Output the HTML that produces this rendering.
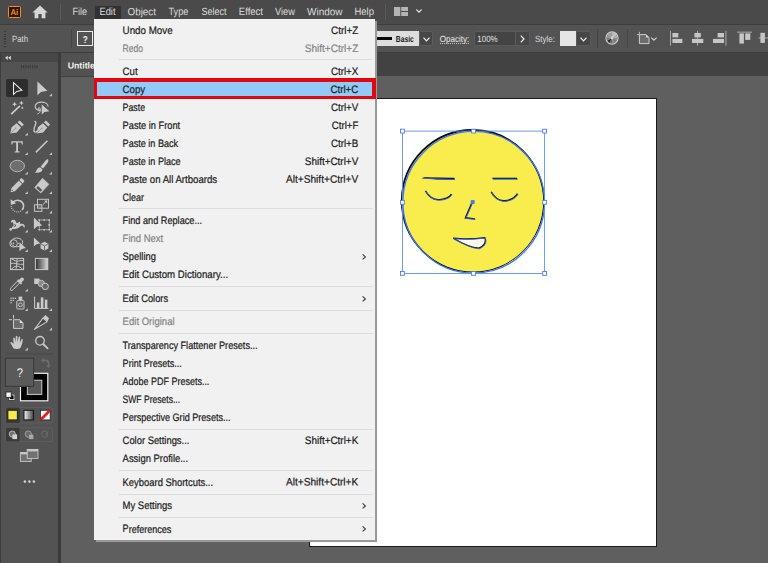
<!DOCTYPE html>
<html><head><meta charset="utf-8"><title>Ai</title>
<style>
html,body{margin:0;padding:0;}
body{width:768px;height:563px;overflow:hidden;position:relative;background:#5f5f5f;font-family:"Liberation Sans",sans-serif;}
.a{position:absolute;}
.t{position:absolute;white-space:nowrap;transform-origin:0 50%;display:block;}
svg{position:absolute;overflow:visible;}
</style></head><body>
<div class="a" style="left:309px;top:97.5px;width:347.5px;height:449px;background:#1a1a1a;"></div>
<div class="a" style="left:310px;top:98.5px;width:345.5px;height:447px;background:#fff;"></div>
<svg class="a" style="left:0;top:0" width="768" height="563" viewBox="0 0 768 563"><circle cx="472.6" cy="200.8" r="70.8" fill="#f9ec4d" stroke="#0b0d12" stroke-width="1.8"/><circle cx="473.2" cy="201.6" r="70" fill="#f9ec4d"/><circle cx="473.7" cy="202.3" r="70.85" fill="none" stroke="#3f74f2" stroke-width="1.3"/><g transform="translate(-0.5,-0.6)"><path d="M424 178.1 L454.8 178.7 L454.8 180.1 L437 179.9 Z" fill="#0e1630" stroke="#0e1630" stroke-width="0.5"/><path d="M493 179 L517.6 179" stroke="#0e1630" stroke-width="1.4" fill="none"/><path d="M425.9 191.4 C430 198.5 436 200.6 440.5 200.2 C445.5 199.8 450 198 452 194.8" stroke="#0e1630" stroke-width="1.4" fill="none"/><path d="M491.7 192.5 C495 198.5 500 201.6 505 201.3 C510.5 201 515.5 198.5 518 194.3" stroke="#0e1630" stroke-width="1.4" fill="none"/><path d="M472.8 202.5 L465.9 218.4 L475.4 219.5" stroke="#0e1630" stroke-width="1.4" fill="none"/><path d="M453.8 238.8 Q469 240.4 485.3 238.2 C487 241.5 485.5 246.5 479.3 248.8 C472 248.2 462 243.6 453.8 238.8 Z" fill="#fbfae8" stroke="#0e1630" stroke-width="1.3"/></g><path d="M422.2 178.3 L455 179.6" stroke="#2f62e0" stroke-width="1" fill="none"/><path d="M493 179.2 L517.8 179.2" stroke="#2f62e0" stroke-width="1" fill="none"/><path d="M425.9 191.4 C430 198.5 436 200.6 440.5 200.2 C445.5 199.8 450 198 452 194.8" stroke="#2f62e0" stroke-width="0.9" fill="none"/><path d="M491.7 192.5 C495 198.5 500 201.6 505 201.3 C510.5 201 515.5 198.5 518 194.3" stroke="#2f62e0" stroke-width="0.9" fill="none"/><path d="M472.8 202.5 L465.9 218.4 L475.4 219.5" stroke="#2f62e0" stroke-width="0.9" fill="none"/><path d="M453.8 238.8 Q469 240.4 485.3 238.2 C487 241.5 485.5 246.5 479.3 248.8 C472 248.2 462 243.6 453.8 238.8 Z" fill="none" stroke="#2f62e0" stroke-width="0.8"/><rect x="470.8" y="200.1" width="3.8" height="3.8" fill="#3f78f2"/><rect x="402.45" y="131.1" width="142.15000000000003" height="142.35" fill="none" stroke="#5c8cf5" stroke-width="0.9"/><rect x="400.55" y="129.2" width="3.8" height="3.8" fill="#fff" stroke="#4a7df0" stroke-width="0.9"/><rect x="471.625" y="129.2" width="3.8" height="3.8" fill="#fff" stroke="#4a7df0" stroke-width="0.9"/><rect x="542.7" y="129.2" width="3.8" height="3.8" fill="#fff" stroke="#4a7df0" stroke-width="0.9"/><rect x="400.55" y="200.37499999999997" width="3.8" height="3.8" fill="#fff" stroke="#4a7df0" stroke-width="0.9"/><rect x="542.7" y="200.37499999999997" width="3.8" height="3.8" fill="#fff" stroke="#4a7df0" stroke-width="0.9"/><rect x="400.55" y="271.55" width="3.8" height="3.8" fill="#fff" stroke="#4a7df0" stroke-width="0.9"/><rect x="471.625" y="271.55" width="3.8" height="3.8" fill="#fff" stroke="#4a7df0" stroke-width="0.9"/><rect x="542.7" y="271.55" width="3.8" height="3.8" fill="#fff" stroke="#4a7df0" stroke-width="0.9"/></svg>
<div class="a" style="left:0;top:0;width:768px;height:24.2px;background:#4a4a4a;"></div>
<div class="a" style="left:0;top:24px;width:768px;height:28.5px;background:#535353;"></div>
<div class="a" style="left:0;top:24.1px;width:768px;height:1px;background:#3d3d3d;"></div>
<div class="a" style="left:0;top:52.5px;width:768px;height:23.5px;background:#424242;"></div>
<div class="a" style="left:60.3px;top:53.3px;width:60px;height:22.7px;background:#515151;"></div>
<div class="a" style="left:60.3px;top:76px;width:40px;height:1.1px;background:#3f3f3f;"></div>
<span class="t" style="left:67px;top:57px;font-size:8.9px;line-height:16px;color:#f4f2ec;transform:translate(0.70px,0.40px) rotate(0.03deg) scaleX(0.9842);font-weight:bold;">Untitled</span>
<div class="a" style="left:0;top:51.9px;width:768px;height:1.1px;background:#3d3d3d;"></div>
<div class="a" style="left:7.9px;top:5.5px;width:13px;height:12.5px;box-sizing:border-box;border:1.1px solid #f3901a;border-radius:1.5px;background:#2d1505;"></div>
<span class="t" style="left:10px;top:5px;font-size:8.2px;line-height:16px;color:#f3901a;transform:translate(0.50px,0.10px) rotate(0.03deg) scaleX(0.9512);font-weight:bold;">Ai</span>
<svg style="left:32px;top:5.4px" width="16" height="14" viewBox="0 0 16 14"><path d="M8 0.4 L0.4 7.6 L2.6 7.6 L2.6 13.2 L6.4 13.2 L6.4 9 L9.6 9 L9.6 13.2 L13.4 13.2 L13.4 7.6 L15.6 7.6 Z" fill="#d6d6d6"/></svg>
<div class="a" style="left:59.5px;top:4px;width:1px;height:16px;background:#5a5a5a;"></div>
<div class="a" style="left:94.8px;top:5.6px;width:26px;height:13.4px;background:#313131;"></div>
<span class="t" style="left:72px;top:3px;font-size:10.5px;line-height:16px;color:#dcdcdc;transform:translate(0.50px,0.20px) rotate(0.03deg) scaleX(0.8570);">File</span>
<span class="t" style="left:99px;top:3px;font-size:10.5px;line-height:16px;color:#dcdcdc;transform:translate(0.50px,0.20px) rotate(0.03deg) scaleX(0.8843);">Edit</span>
<span class="t" style="left:127px;top:3px;font-size:10.5px;line-height:16px;color:#dcdcdc;transform:translate(0.50px,0.20px) rotate(0.03deg) scaleX(0.9391);">Object</span>
<span class="t" style="left:168px;top:3px;font-size:10.5px;line-height:16px;color:#dcdcdc;transform:translate(0.50px,0.20px) rotate(0.03deg) scaleX(0.8786);">Type</span>
<span class="t" style="left:201px;top:3px;font-size:10.5px;line-height:16px;color:#dcdcdc;transform:translate(0.50px,0.20px) rotate(0.03deg) scaleX(0.8567);">Select</span>
<span class="t" style="left:238px;top:3px;font-size:10.5px;line-height:16px;color:#dcdcdc;transform:translate(0.80px,0.20px) rotate(0.03deg) scaleX(0.9079);">Effect</span>
<span class="t" style="left:275px;top:3px;font-size:10.5px;line-height:16px;color:#dcdcdc;transform:translate(0.00px,0.20px) rotate(0.03deg) scaleX(0.8861);">View</span>
<span class="t" style="left:307px;top:3px;font-size:10.5px;line-height:16px;color:#dcdcdc;transform:translate(0.00px,0.20px) rotate(0.03deg) scaleX(0.9506);">Window</span>
<span class="t" style="left:354px;top:3px;font-size:10.5px;line-height:16px;color:#dcdcdc;transform:translate(0.50px,0.20px) rotate(0.03deg) scaleX(0.9030);">Help</span>
<div class="a" style="left:385px;top:4px;width:1px;height:16px;background:#5a5a5a;"></div>
<svg style="left:394px;top:6.8px" width="14" height="9" viewBox="0 0 14 9"><rect x="0" y="0" width="6.3" height="9" fill="#b4b4b4"/><rect x="7.2" y="0" width="6.8" height="4" fill="#b4b4b4"/><rect x="7.2" y="5" width="6.8" height="4" fill="#b4b4b4"/></svg>
<svg style="left:415.5px;top:9.3px" width="6" height="4" viewBox="0 0 6 4"><path d="M0.4 0.5 L3 3.2 L5.6 0.5" stroke="#e0e0e0" stroke-width="1.1" fill="none"/></svg>
<div class="a" style="left:4px;top:31.0px;width:2px;height:1.3px;background:#3a3a3a;"></div>
<div class="a" style="left:4px;top:33.5px;width:2px;height:1.3px;background:#3a3a3a;"></div>
<div class="a" style="left:4px;top:35.9px;width:2px;height:1.3px;background:#3a3a3a;"></div>
<div class="a" style="left:4px;top:38.4px;width:2px;height:1.3px;background:#3a3a3a;"></div>
<div class="a" style="left:4px;top:40.8px;width:2px;height:1.3px;background:#3a3a3a;"></div>
<div class="a" style="left:4px;top:43.2px;width:2px;height:1.3px;background:#3a3a3a;"></div>
<div class="a" style="left:4px;top:45.7px;width:2px;height:1.3px;background:#3a3a3a;"></div>
<span class="t" style="left:12px;top:31px;font-size:9px;line-height:16px;color:#dcdcdc;transform:translate(0.00px,0.40px) rotate(0.03deg) scaleX(0.8642);">Path</span>
<div class="a" style="left:77px;top:31.2px;width:15.9px;height:15.2px;box-sizing:border-box;border:1.8px solid #ececec;background:#535353;"></div>
<span class="t" style="left:82px;top:31px;font-size:10px;line-height:16px;color:#ececec;transform:translate(0.80px,0.60px) rotate(0.03deg) scaleX(0.8185);font-weight:bold;">?</span>
<div class="a" style="left:71px;top:28.5px;width:1px;height:19.5px;background:#454545;"></div>
<div class="a" style="left:372px;top:31.2px;width:46.8px;height:14.7px;background:#dedede;"></div>
<div class="a" style="left:372px;top:37.4px;width:20.3px;height:2.5px;background:#0a0a0a;"></div>
<span class="t" style="left:395px;top:31px;font-size:8.8px;line-height:16px;color:#1a1a1a;transform:translate(0.80px,0.10px) rotate(0.03deg) scaleX(0.7665);font-weight:bold;">Basic</span>
<div class="a" style="left:419.4px;top:30.6px;width:13.8px;height:15.6px;box-sizing:border-box;border:1px solid #5c5c5c;border-radius:2px;background:#464646;"></div>
<svg style="left:423.2px;top:37px" width="7" height="5" viewBox="0 0 7 5"><path d="M0.5 0.6 L3.5 3.8 L6.5 0.6" stroke="#f0f0f0" stroke-width="1.2" fill="none"/></svg>
<span class="t" style="left:439px;top:31px;font-size:9px;line-height:16px;color:#ececec;transform:translate(0.80px,0.30px) rotate(0.03deg) scaleX(0.8936);">Opacity:</span>
<div class="a" style="left:440px;top:43.1px;width:29px;height:0;border-top:1px dotted #c4c4c4;"></div>
<div class="a" style="left:474.3px;top:30.6px;width:41.4px;height:15.6px;box-sizing:border-box;border:1px solid #5a5a5a;border-radius:2px 0 0 2px;background:#444;"></div>
<span class="t" style="left:477px;top:31px;font-size:9px;line-height:16px;color:#e2e2e2;transform:translate(0.30px,0.30px) rotate(0.03deg) scaleX(0.8819);">100%</span>
<div class="a" style="left:515.7px;top:30.6px;width:14.6px;height:15.6px;box-sizing:border-box;border:1px solid #5a5a5a;border-left:none;border-radius:0 2px 2px 0;background:#474747;"></div>
<svg style="left:520px;top:35px" width="5" height="8" viewBox="0 0 5 8"><path d="M0.8 0.6 L4 4 L0.8 7.4" stroke="#f0f0f0" stroke-width="1.2" fill="none"/></svg>
<span class="t" style="left:535px;top:31px;font-size:9px;line-height:16px;color:#dcdcdc;transform:translate(0.00px,0.30px) rotate(0.03deg) scaleX(0.8885);">Style:</span>
<div class="a" style="left:560px;top:30.9px;width:16px;height:15.3px;background:#e6e6e6;"></div>
<div class="a" style="left:576px;top:30.6px;width:14.6px;height:15.6px;box-sizing:border-box;border:1px solid #5a5a5a;border-radius:0 2px 2px 0;background:#464646;"></div>
<svg style="left:580px;top:37px" width="7" height="5" viewBox="0 0 7 5"><path d="M0.5 0.6 L3.5 3.8 L6.5 0.6" stroke="#f0f0f0" stroke-width="1.2" fill="none"/></svg>
<div class="a" style="left:596.5px;top:29px;width:1px;height:19px;background:#444;"></div>
<svg style="left:604.5px;top:31.2px" width="14" height="14" viewBox="0 0 14 14"><circle cx="7" cy="7" r="6.1" fill="#8e8e8e" stroke="#cfcfcf" stroke-width="1.1"/><path d="M7 7 L7.00 1.60 A5.4 5.4 0 0 1 9.70 2.32 Z" fill="#b9b9b9"/><path d="M7 7 L9.70 2.32 A5.4 5.4 0 0 1 11.68 4.30 Z" fill="#c6c6c6"/><path d="M7 7 L11.68 4.30 A5.4 5.4 0 0 1 12.40 7.00 Z" fill="#a9a9a9"/><path d="M7 7 L12.40 7.00 A5.4 5.4 0 0 1 11.68 9.70 Z" fill="#8d8d8d"/><path d="M7 7 L11.68 9.70 A5.4 5.4 0 0 1 9.70 11.68 Z" fill="#7c7c7c"/><path d="M7 7 L9.70 11.68 A5.4 5.4 0 0 1 7.00 12.40 Z" fill="#8a8a8a"/><path d="M7 7 L7.00 12.40 A5.4 5.4 0 0 1 4.30 11.68 Z" fill="#6e6e6e"/><path d="M7 7 L4.30 11.68 A5.4 5.4 0 0 1 2.32 9.70 Z" fill="#262626"/><path d="M7 7 L2.32 9.70 A5.4 5.4 0 0 1 1.60 7.00 Z" fill="#7a7a7a"/><path d="M7 7 L1.60 7.00 A5.4 5.4 0 0 1 2.32 4.30 Z" fill="#969696"/><path d="M7 7 L2.32 4.30 A5.4 5.4 0 0 1 4.30 2.32 Z" fill="#a4a4a4"/><path d="M7 7 L4.30 2.32 A5.4 5.4 0 0 1 7.00 1.60 Z" fill="#9c9c9c"/><circle cx="7" cy="7" r="1.4" fill="#d6d6d6"/></svg>
<div class="a" style="left:627px;top:29px;width:1px;height:19px;background:#454545;"></div>
<svg style="left:636px;top:31px" width="22" height="14" viewBox="0 0 22 14"><path d="M3.4 0.8 V3 M1 3.6 H3" stroke="#c8c8c8" stroke-width="0.9" fill="none"/><path d="M3.4 3.6 H10 L13 6.6 V12.6 H3.4 Z" fill="#6c6c6c" stroke="#cecece" stroke-width="1"/><path d="M10 3.6 L13 6.6 H10 Z" fill="#e0e0e0"/><path d="M15.2 6.6 L17.9 9.2 L20.6 6.6" stroke="#d4d4d4" stroke-width="1.1" fill="none"/></svg>
<svg style="left:0;top:0" width="768" height="60" viewBox="0 0 768 60"><rect x="670" y="30.8" width="0.9" height="14.8" fill="#b4b4b4"/><rect x="672.4" y="33" width="5.9" height="4.4" fill="#c6c6c6"/><rect x="672.4" y="38.9" width="10" height="4.1" fill="#c6c6c6"/><rect x="697" y="30.8" width="0.9" height="14.8" fill="#b4b4b4"/><rect x="694.4" y="33" width="6.4" height="4.4" fill="#c6c6c6"/><rect x="692" y="38.9" width="11.3" height="4.1" fill="#c6c6c6"/><rect x="725.5" y="30.8" width="0.9" height="14.8" fill="#b4b4b4"/><rect x="717.6" y="33" width="6.4" height="4.4" fill="#c6c6c6"/><rect x="713" y="38.9" width="11" height="4.1" fill="#c6c6c6"/><rect x="737.1" y="31.7" width="14.9" height="0.9" fill="#b4b4b4"/><rect x="739.4" y="33.4" width="4.5" height="10.2" fill="#c6c6c6"/><rect x="745.2" y="33.4" width="5.1" height="6.5" fill="#c6c6c6"/><rect x="758.4" y="37.5" width="10" height="0.9" fill="#b4b4b4"/><rect x="760.4" y="32.8" width="4.5" height="10.1" fill="#c6c6c6"/></svg>
<div class="a" style="left:0;top:52.5px;width:58px;height:511px;background:#535353;"></div>
<div class="a" style="left:0;top:52.9px;width:59.2px;height:9.4px;background:#474747;"></div>
<div class="a" style="left:0;top:52.5px;width:1.2px;height:511px;background:#3e3e3e;"></div>
<div class="a" style="left:58px;top:52.5px;width:2.5px;height:511px;background:#3c3c3c;"></div>
<svg style="left:0;top:0" width="60" height="563" viewBox="0 0 60 563"><path d="M7.8 55.7 L5 57.8 L7.8 59.9 Z M10.9 55.7 L8.1 57.8 L10.9 59.9 Z" fill="#d8d8d8"/><rect x="21.00" y="65.1" width="1.1" height="3.2" fill="#3b3b3b"/><rect x="23.20" y="65.1" width="1.1" height="3.2" fill="#3b3b3b"/><rect x="25.40" y="65.1" width="1.1" height="3.2" fill="#3b3b3b"/><rect x="27.60" y="65.1" width="1.1" height="3.2" fill="#3b3b3b"/><rect x="29.80" y="65.1" width="1.1" height="3.2" fill="#3b3b3b"/><rect x="32.00" y="65.1" width="1.1" height="3.2" fill="#3b3b3b"/><rect x="34.20" y="65.1" width="1.1" height="3.2" fill="#3b3b3b"/><rect x="36.40" y="65.1" width="1.1" height="3.2" fill="#3b3b3b"/><rect x="6" y="79" width="22" height="18" rx="2" fill="#2d2d2d"/><path d="M13.5 82.6 L13.5 94.4 L16.9 91.4 L21.9 90.3 Z" fill="none" stroke="#ececec" stroke-width="1.05" stroke-linejoin="miter"/><path d="M37.4 81.6 L37.4 95.2 L41 92 L47.4 90.7 Z" fill="#cacaca"/><path d="M52 93.4 L52 96.2 L49.2 96.2 Z" fill="#cacaca"/><path d="M11.2 114.1 L19.9 105.8" stroke="#cacaca" stroke-width="1.8" fill="none"/><path d="M14.6 101.8 L15.4 103.5 L17.1 104.3 L15.4 105.1 L14.6 106.8 L13.799999999999999 105.1 L12.1 104.3 L13.799999999999999 103.5 Z" fill="#cacaca"/><path d="M21.4 100.7 L22.136 102.264 L23.7 103 L22.136 103.736 L21.4 105.3 L20.663999999999998 103.736 L19.099999999999998 103 L20.663999999999998 102.264 Z" fill="#cacaca"/><path d="M22.3 106.4 L22.78 107.42 L23.8 107.9 L22.78 108.38000000000001 L22.3 109.4 L21.82 108.38000000000001 L20.8 107.9 L21.82 107.42 Z" fill="#cacaca"/><path d="M40.6 110.6 C37 110.4 35 108.6 35.2 106.4 C35.5 103.4 38.8 102 41.8 102.1 C45.4 102.2 48.3 104 48 106.6" stroke="#cacaca" stroke-width="1.1" fill="none"/><path d="M39.4 110.4 C38 109.4 37.8 107.8 39 107.6 C40.4 107.5 40.6 109.8 39.9 111.6 C39.4 113 38.4 113.8 37.4 114" stroke="#cacaca" stroke-width="1" fill="none"/><path d="M41.7 104.4 L41.7 114.6 L44.5 112 L49.4 111.2 Z" fill="#cacaca"/><path d="M10.2 133.6 L11.6 127.2 L16.6 123.2 L21 127.6 L16.8 132.4 Z" fill="#cacaca"/><path d="M17.6 122.2 L19.6 120.4 L23.8 124.6 L22 126.6 Z" fill="#cacaca"/><path d="M10.6 133.2 L15.4 128.4" stroke="#6a6a6a" stroke-width="0.6"/><circle cx="15.8" cy="128" r="0.6" fill="#6a6a6a"/><path d="M27.8 132.79999999999998 L27.8 135.6 L25.0 135.6 Z" fill="#cacaca"/><path d="M36.5 133.6 L37.9 127.2 L42.900000000000006 123.2 L47.3 127.6 L43.1 132.4 Z" fill="#cacaca"/><path d="M43.900000000000006 122.2 L45.900000000000006 120.4 L50.1 124.6 L48.3 126.6 Z" fill="#cacaca"/><path d="M36.9 133.2 L41.7 128.4" stroke="#6a6a6a" stroke-width="0.6"/><circle cx="42.1" cy="128" r="0.6" fill="#6a6a6a"/><path d="M34.4 121.6 C35.6 121 36.4 122.4 35.6 124.4 C34.6 126.8 33.4 129.6 34.2 131.4 C35 132.8 36.6 131.8 37.2 130.8" stroke="#cacaca" stroke-width="1.3" fill="none"/><path d="M11.4 141.2 H22.8 V144.4 H21.8 L21.4 142.6 H18 V151.2 L19.6 151.6 V152.6 H14.6 V151.6 L16.2 151.2 V142.6 H12.8 L12.4 144.4 H11.4 Z" fill="#cacaca"/><path d="M27.8 152.2 L27.8 155 L25.0 155 Z" fill="#cacaca"/><path d="M35.8 152.4 L47.4 140.8" stroke="#cacaca" stroke-width="1.5" fill="none"/><path d="M52 152.2 L52 155 L49.2 155 Z" fill="#cacaca"/><ellipse cx="17.3" cy="166" rx="7.2" ry="5.7" fill="#6f6f6f" stroke="#bcbcbc" stroke-width="0.9"/><path d="M27.8 171.79999999999998 L27.8 174.6 L25.0 174.6 Z" fill="#cacaca"/><path d="M47.9 159.3 C48.7 159.9 48.5 161.6 47.5 163 L43 168.6 L40.6 166.8 L45.4 160.8 C46.3 159.6 47.3 158.9 47.9 159.3 Z" fill="#cacaca"/><path d="M40 167.3 L42.4 169.2 C42.6 171.8 39.6 172.9 34.8 172.8 C36.8 171.6 36.2 168.2 40 167.3 Z" fill="#cacaca"/><path d="M52 171.79999999999998 L52 174.6 L49.2 174.6 Z" fill="#cacaca"/><path d="M10.5 192.2 L11.5 187.9 L18.7 180.7 L22.1 184.1 L14.9 191.3 Z" fill="#cacaca"/><path d="M19.3 180.1 L20.6 178.8 C21.2 178.2 21.8 178.2 22.4 178.8 L23.9 180.3 C24.5 180.9 24.5 181.5 23.9 182.1 L22.7 183.5 Z" fill="#cacaca"/><circle cx="12.2" cy="190.4" r="0.7" fill="#535353"/><path d="M27.8 191.2 L27.8 194 L25.0 194 Z" fill="#cacaca"/><path d="M34.7 187.6 L42.5 178.3 L48.9 184.3 L40.9 193 Z" fill="#cacaca" stroke="#cacaca" stroke-width="0.6" stroke-linejoin="round"/><path d="M36.4 187.9 L37.9 186.1 L42.2 190.1 L40.7 191.8 Z" fill="#535353"/><path d="M52 191.2 L52 194 L49.2 194 Z" fill="#cacaca"/><path d="M12.8 202.4 C15.2 199.6 19.6 199.6 22 202.2 C24.2 204.6 23.8 208 22 210" stroke="#cacaca" stroke-width="1.7" fill="none"/><path d="M10.5 199.2 L10.9 205 L16.2 203.2 Z" fill="#cacaca"/><path d="M21 211 C19 212.4 15.6 212.4 13.4 210.4 C11.8 209 11.2 207.4 11.3 205.8" stroke="#cacaca" stroke-width="1.2" stroke-dasharray="0.9 1.1" fill="none"/><path d="M27.8 210.6 L27.8 213.4 L25.0 213.4 Z" fill="#cacaca"/><rect x="37.5" y="204.8" width="4.4" height="3.4" fill="#707070"/><rect x="37.5" y="199.3" width="11" height="8.9" fill="none" stroke="#cacaca" stroke-width="0.95"/><rect x="34.4" y="204.8" width="7.5" height="6.5" fill="none" stroke="#cacaca" stroke-width="0.95"/><path d="M42.8 204.6 L46.2 201.4" stroke="#cacaca" stroke-width="1" fill="none"/><path d="M44.2 200.6 H47.2 V203.6 Z" fill="#cacaca"/><path d="M52 210.6 L52 213.4 L49.2 213.4 Z" fill="#cacaca"/><path d="M10.2 229.4 C12.4 227.6 13.6 225.6 13.4 223.6 C13.2 222.2 12.2 221.8 11.6 222.4 C11 223 10.6 222 11.2 221 C12.2 219.4 14.6 219.4 15.6 221.2 C16.4 222.8 17.2 223.6 18.2 222.8 C18.6 222 19.4 221.4 19.8 222 C20.2 222.8 19.6 223.6 20.4 223.8 C22 223.4 24 223.6 24.6 225.4 C25 226.8 24.8 227.8 24 227.6 C23.2 227.4 23.6 225.8 22.2 225.6 C20.6 225.6 19.4 227.8 17.2 228.6 C15.2 229.4 13.4 228.6 12.2 229.2 C11.6 229.6 10.8 230 10.2 229.4 Z" fill="#cacaca"/><circle cx="10.6" cy="229.4" r="1.3" fill="#cacaca"/><circle cx="14.7" cy="225.4" r="1.25" fill="#535353"/><circle cx="14.7" cy="225.4" r="0.55" fill="#cacaca"/><path d="M27.8 229.79999999999998 L27.8 232.6 L25.0 232.6 Z" fill="#cacaca"/><rect x="39.2" y="220" width="10" height="9.8" fill="#505050" stroke="#cacaca" stroke-width="0.7"/><rect x="38.45" y="219.25" width="1.5" height="1.5" fill="#cacaca"/><rect x="48.45" y="219.25" width="1.5" height="1.5" fill="#cacaca"/><rect x="48.45" y="229.05" width="1.5" height="1.5" fill="#cacaca"/><rect x="38.45" y="229.05" width="1.5" height="1.5" fill="#cacaca"/><rect x="48.45" y="224.15" width="1.5" height="1.5" fill="#cacaca"/><rect x="43.45" y="229.05" width="1.5" height="1.5" fill="#cacaca"/><rect x="43.45" y="219.25" width="1.5" height="1.5" fill="#cacaca"/><path d="M33.9 217.6 L33.9 229.2 L37 226.4 L42.2 225.4 Z" fill="#cacaca"/><path d="M52 229.79999999999998 L52 232.6 L49.2 232.6 Z" fill="#cacaca"/><ellipse cx="16.8" cy="242.4" rx="5.9" ry="4.4" fill="none" stroke="#cacaca" stroke-width="0.95"/><ellipse cx="13.6" cy="243.4" rx="3.8" ry="3.7" fill="none" stroke="#cacaca" stroke-width="0.9"/><path d="M12.6 243.4 H14.4 M13.5 242.5 V244.3 M18 243.4 H19" stroke="#cacaca" stroke-width="0.7"/><path d="M19.4 242.2 L19.4 251.2 L22 248.9 L25.8 248 Z" fill="#cacaca"/><path d="M27.8 249.2 L27.8 252 L25.0 252 Z" fill="#cacaca"/><path d="M33.9 237.4 L33.9 246.4 L36.5 244.2 L40.3 243.4 Z" fill="#cacaca"/><path d="M44.5 241.8 L48.4 243.8 V248.4 L44.5 250.4 L40.6 248.4 V243.8 Z" fill="#cacaca"/><path d="M40.9 244 L44.5 245.9 L48.1 244 M44.5 245.9 V250.2" stroke="#555" stroke-width="0.8" fill="none"/><path d="M52 249.2 L52 252 L49.2 252 Z" fill="#cacaca"/><rect x="10.6" y="258.4" width="13" height="11.2" fill="none" stroke="#cacaca" stroke-width="1"/><path d="M17.2 258.4 C16.4 262 17.2 266 15.8 269.6 M10.6 263.4 C13.6 262.4 20 265.2 23.6 264.2 M16.8 261.4 C15 260.6 13 259.8 11.4 258.8 M16.9 261.6 C18.8 260.8 21 260.2 23.6 260.6 M16.6 266 C14.6 266.4 12.6 267.6 11.4 269.4 M16.8 266 C19 266.4 21.2 267.6 22.6 269.4" stroke="#cacaca" stroke-width="0.95" fill="none"/><defs><linearGradient id="tg1" x1="0" x2="1" y1="0" y2="0"><stop offset="0" stop-color="#2e2e2e"/><stop offset="1" stop-color="#dadada"/></linearGradient></defs><rect x="35.4" y="258.4" width="12.4" height="11.2" fill="url(#tg1)" stroke="#cacaca" stroke-width="1"/><path d="M10.6 290.2 C10.2 289.4 10.4 288.4 11.2 287.6 L17.6 281 L19.6 283 L13.2 289.6 C12.4 290.4 11.4 290.6 10.6 290.2 Z" fill="none" stroke="#cacaca" stroke-width="1"/><path d="M17 280.4 L18.2 279.2 L19 280 L20.6 278.2 C21.4 277.2 22.6 277.2 23.4 278 C24.2 278.8 24 280 23.2 280.8 L21.4 282.4 L22.2 283.2 L21 284.4 Z" fill="#cacaca"/><path d="M27.8 288.8 L27.8 291.6 L25.0 291.6 Z" fill="#cacaca"/><rect x="34.2" y="278.6" width="5.4" height="5.4" fill="#cacaca"/><circle cx="41.2" cy="283.4" r="3.2" fill="#8a8a8a" stroke="#cacaca" stroke-width="0.8"/><circle cx="45.2" cy="286.4" r="3.2" fill="#666" stroke="#cacaca" stroke-width="1"/><rect x="10.4" y="297.6" width="1.3" height="1.3" fill="#cacaca"/><rect x="12.6" y="297.6" width="1.3" height="1.3" fill="#cacaca"/><rect x="14.8" y="297.6" width="1.3" height="1.3" fill="#cacaca"/><rect x="10.4" y="299.8" width="1.3" height="1.3" fill="#cacaca"/><rect x="12.6" y="299.8" width="1.3" height="1.3" fill="#cacaca"/><rect x="10.4" y="302" width="1.3" height="1.3" fill="#cacaca"/><rect x="16.8" y="300.6" width="7.2" height="8.4" rx="0.8" fill="#575757" stroke="#cacaca" stroke-width="1"/><rect x="18.6" y="296.6" width="3.6" height="3.4" fill="#cacaca"/><circle cx="20.4" cy="304.8" r="1.9" fill="none" stroke="#cacaca" stroke-width="1"/><path d="M27.8 308.2 L27.8 311 L25.0 311 Z" fill="#cacaca"/><path d="M34.6 296.6 V308.4 H48.6" stroke="#cacaca" stroke-width="1" fill="none"/><rect x="36.8" y="302.4" width="2.6" height="6" fill="#cacaca"/><rect x="40.8" y="297.4" width="2.6" height="11" fill="#cacaca"/><rect x="44.8" y="299.6" width="2.6" height="8.8" fill="#cacaca"/><path d="M52 308.2 L52 311 L49.2 311 Z" fill="#cacaca"/><path d="M13.5 315 V318.6 M9 319.7 H12" stroke="#cacaca" stroke-width="1" fill="none"/><path d="M13.5 319.7 H19.8 L23 322.9 V328.4 H13.5 Z" fill="#6c6c6c" stroke="#cacaca" stroke-width="1"/><path d="M19.8 319.7 L23 322.9 H19.8 Z" fill="#e2e2e2"/><path d="M34.5 329.3 L43 318 L47.2 321.6 Z" fill="#474747" stroke="#cacaca" stroke-width="1.1" stroke-linejoin="round"/><path d="M43 317.6 L45.6 315 L49 318.2 L47.4 321.4 Z" fill="#cacaca"/><path d="M52 327.59999999999997 L52 330.4 L49.2 330.4 Z" fill="#cacaca"/><path d="M13.6 348.6 C12.6 346.6 11.4 344.6 10.6 343.2 C10.2 342.4 11.2 341.6 12 342.4 L13.6 344 L13.2 338.2 C13.2 337.2 14.6 337.2 14.8 338.2 L15.4 342 L15.8 336.6 C15.8 335.6 17.4 335.6 17.4 336.6 L17.6 342 L18.6 337.2 C18.8 336.2 20.2 336.4 20.2 337.4 L19.8 342.6 L21.4 339.4 C21.8 338.6 23 339 22.8 340 C22.4 342.4 21.6 346.2 20.4 348 C19 349.2 15 349.2 13.6 348.6 Z" fill="#cacaca"/><path d="M27.8 347.59999999999997 L27.8 350.4 L25.0 350.4 Z" fill="#cacaca"/><circle cx="40" cy="340.8" r="4.3" fill="none" stroke="#cacaca" stroke-width="1.3"/><path d="M43.2 344 L47.6 348.4" stroke="#cacaca" stroke-width="1.8" stroke-linecap="round"/><rect x="5" y="353.6" width="48.8" height="0.9" fill="#484848"/><path d="M42.6 360.4 H45.4 C47.6 360.4 48.6 361.6 48.6 363.6 V365.6" stroke="#6e6e6e" stroke-width="1.6" fill="none"/><path d="M41.2 360.4 L43.8 358 V362.8 Z M48.6 368 L46.2 365.2 H51 Z" fill="#6e6e6e"/><rect x="20.5" y="373.3" width="27.3" height="27.5" fill="#000" stroke="#f6f6f6" stroke-width="1.15"/><rect x="27.3" y="380.2" width="14.5" height="14.2" fill="#585858" stroke="#d2d2d2" stroke-width="0.95"/><rect x="5.4" y="358.2" width="28.2" height="28.2" fill="#5a5a5a" stroke="#3b3b3b" stroke-width="1.1"/><rect x="8.4" y="394" width="6.4" height="6.4" fill="#262626"/><rect x="9.4" y="395" width="4.6" height="4.6" fill="#000" stroke="#e6e6e6" stroke-width="0.9"/><rect x="5.9" y="392" width="5.4" height="5.4" fill="#fff" stroke="#2a2a2a" stroke-width="1"/><rect x="6" y="407.6" width="46.4" height="15.3" rx="1.5" fill="none" stroke="#626262" stroke-width="0.8"/><rect x="6" y="407.6" width="14" height="15.3" rx="1.5" fill="#3a3a3a"/><rect x="7.9" y="410.3" width="9.4" height="9.6" fill="#f8ec4d" stroke="#1c1c1c" stroke-width="0.9"/><defs><linearGradient id="tg2" x1="0" x2="1" y1="0" y2="0"><stop offset="0" stop-color="#f6f6f6"/><stop offset="0.85" stop-color="#5a5a5a"/><stop offset="1" stop-color="#3a3a3a"/></linearGradient><clipPath id="ncp"><rect x="40.4" y="410.3" width="9.8" height="9.6"/></clipPath></defs><rect x="24" y="410.3" width="9.6" height="9.6" fill="url(#tg2)" stroke="#161616" stroke-width="1"/><rect x="40.4" y="410.3" width="9.8" height="9.6" fill="#fff" stroke="#262626" stroke-width="0.8"/><path d="M39.8 420.6 L50.8 409.6" stroke="#f0101a" stroke-width="2.7" clip-path="url(#ncp)"/><rect x="6" y="427.8" width="46.4" height="13.6" rx="1.5" fill="none" stroke="#626262" stroke-width="0.8"/><rect x="6" y="427.8" width="14" height="13.6" rx="1.5" fill="#3a3a3a"/><circle cx="12.3" cy="434.1" r="3.1" fill="#707070" stroke="#c4c4c4" stroke-width="0.85"/><rect x="12.4" y="434.4" width="4.7" height="4.7" fill="#d2d2d2"/><circle cx="28.3" cy="434.1" r="3.1" fill="#696969" stroke="#a6a6a6" stroke-width="0.85"/><rect x="29" y="434.7" width="4.4" height="4.4" fill="#a8a8a8"/><circle cx="44.7" cy="434.2" r="3.1" fill="none" stroke="#6e6e6e" stroke-width="0.9"/><path d="M44.7 434.2 h2.3 v-2.3" stroke="#6e6e6e" stroke-width="0.8" fill="none"/><path d="M20 427.8 V441.4 M36.4 427.8 V441.4" stroke="#5e5e5e" stroke-width="0.6"/><rect x="20.4" y="452.4" width="10.8" height="9" fill="#707070" stroke="#c8c8c8" stroke-width="0.9"/><rect x="20.4" y="452.4" width="10.8" height="2" fill="#c8c8c8"/><rect x="27.2" y="449.4" width="10.8" height="9" fill="#707070" stroke="#c8c8c8" stroke-width="0.9"/><rect x="27.2" y="449.4" width="10.8" height="2" fill="#c8c8c8"/><circle cx="24.9" cy="481.6" r="1.3" fill="#cdcdcd"/><circle cx="29.4" cy="481.6" r="1.3" fill="#cdcdcd"/><circle cx="33.9" cy="481.6" r="1.3" fill="#cdcdcd"/></svg>
<span class="t" style="left:16px;top:365px;font-size:12.6px;line-height:16px;color:#f2f2f2;transform:translate(0.70px,0.10px) rotate(0.03deg) scaleX(0.8847);">?</span>
<div class="a" style="left:93.9px;top:18.8px;width:281.20000000000005px;height:521.2px;background:#f1f1f1;box-shadow:1.7px 1.8px 0.6px #999;"></div>
<div class="a" style="left:94px;top:78.4px;width:281.6px;height:20.8px;background:#e2070f;"></div>
<div class="a" style="left:96.8px;top:81.8px;width:275.4px;height:14.3px;background:#92c9f6;"></div>
<span class="t" style="left:122px;top:21px;font-size:10.8px;line-height:16px;color:#1b1b1b;transform:translate(0.60px,0.50px) rotate(0.03deg) scaleX(0.9053);-webkit-text-stroke:0.22px #1b1b1b;">Undo Move</span>
<span class="t" style="left:331px;top:21px;font-size:10.8px;line-height:16px;color:#1b1b1b;transform:translate(0.00px,0.50px) rotate(0.03deg) scaleX(0.9192);-webkit-text-stroke:0.22px #1b1b1b;">Ctrl+Z</span>
<span class="t" style="left:122px;top:39px;font-size:10.8px;line-height:16px;color:#858585;transform:translate(0.60px,0.60px) rotate(0.03deg) scaleX(0.7940);-webkit-text-stroke:0.22px #858585;">Redo</span>
<span class="t" style="left:304px;top:39px;font-size:10.8px;line-height:16px;color:#858585;transform:translate(0.80px,0.60px) rotate(0.03deg) scaleX(0.9285);-webkit-text-stroke:0.22px #858585;">Shift+Ctrl+Z</span>
<span class="t" style="left:122px;top:63px;font-size:10.8px;line-height:16px;color:#1b1b1b;transform:translate(0.60px,0.00px) rotate(0.03deg) scaleX(0.8925);-webkit-text-stroke:0.22px #1b1b1b;">Cut</span>
<span class="t" style="left:331px;top:63px;font-size:10.8px;line-height:16px;color:#1b1b1b;transform:translate(0.00px,0.00px) rotate(0.03deg) scaleX(0.9008);-webkit-text-stroke:0.22px #1b1b1b;">Ctrl+X</span>
<span class="t" style="left:122px;top:80px;font-size:10.8px;line-height:16px;color:#1b1b1b;transform:translate(0.60px,0.90px) rotate(0.03deg) scaleX(0.8924);-webkit-text-stroke:0.22px #1b1b1b;">Copy</span>
<span class="t" style="left:330px;top:80px;font-size:10.8px;line-height:16px;color:#1b1b1b;transform:translate(0.50px,0.90px) rotate(0.03deg) scaleX(0.8996);-webkit-text-stroke:0.22px #1b1b1b;">Ctrl+C</span>
<span class="t" style="left:122px;top:98px;font-size:10.8px;line-height:16px;color:#1b1b1b;transform:translate(0.60px,0.90px) rotate(0.03deg) scaleX(0.8147);-webkit-text-stroke:0.22px #1b1b1b;">Paste</span>
<span class="t" style="left:331px;top:98px;font-size:10.8px;line-height:16px;color:#1b1b1b;transform:translate(0.00px,0.90px) rotate(0.03deg) scaleX(0.9008);-webkit-text-stroke:0.22px #1b1b1b;">Ctrl+V</span>
<span class="t" style="left:122px;top:116px;font-size:10.8px;line-height:16px;color:#1b1b1b;transform:translate(0.60px,0.90px) rotate(0.03deg) scaleX(0.8552);-webkit-text-stroke:0.22px #1b1b1b;">Paste in Front</span>
<span class="t" style="left:331px;top:116px;font-size:10.8px;line-height:16px;color:#1b1b1b;transform:translate(0.80px,0.90px) rotate(0.03deg) scaleX(0.8922);-webkit-text-stroke:0.22px #1b1b1b;">Ctrl+F</span>
<span class="t" style="left:122px;top:134px;font-size:10.8px;line-height:16px;color:#1b1b1b;transform:translate(0.60px,0.80px) rotate(0.03deg) scaleX(0.8405);-webkit-text-stroke:0.22px #1b1b1b;">Paste in Back</span>
<span class="t" style="left:331px;top:134px;font-size:10.8px;line-height:16px;color:#1b1b1b;transform:translate(0.00px,0.80px) rotate(0.03deg) scaleX(0.9008);-webkit-text-stroke:0.22px #1b1b1b;">Ctrl+B</span>
<span class="t" style="left:122px;top:152px;font-size:10.8px;line-height:16px;color:#1b1b1b;transform:translate(0.60px,0.80px) rotate(0.03deg) scaleX(0.8401);-webkit-text-stroke:0.22px #1b1b1b;">Paste in Place</span>
<span class="t" style="left:304px;top:152px;font-size:10.8px;line-height:16px;color:#1b1b1b;transform:translate(0.80px,0.80px) rotate(0.03deg) scaleX(0.9188);-webkit-text-stroke:0.22px #1b1b1b;">Shift+Ctrl+V</span>
<span class="t" style="left:122px;top:170px;font-size:10.8px;line-height:16px;color:#1b1b1b;transform:translate(0.60px,0.80px) rotate(0.03deg) scaleX(0.8893);-webkit-text-stroke:0.22px #1b1b1b;">Paste on All Artboards</span>
<span class="t" style="left:286px;top:170px;font-size:10.8px;line-height:16px;color:#1b1b1b;transform:translate(0.00px,0.80px) rotate(0.03deg) scaleX(0.9373);-webkit-text-stroke:0.22px #1b1b1b;">Alt+Shift+Ctrl+V</span>
<span class="t" style="left:122px;top:188px;font-size:10.8px;line-height:16px;color:#1b1b1b;transform:translate(0.60px,0.70px) rotate(0.03deg) scaleX(0.8253);-webkit-text-stroke:0.22px #1b1b1b;">Clear</span>
<span class="t" style="left:122px;top:212px;font-size:10.8px;line-height:16px;color:#1b1b1b;transform:translate(0.60px,0.20px) rotate(0.03deg) scaleX(0.8488);-webkit-text-stroke:0.22px #1b1b1b;">Find and Replace...</span>
<span class="t" style="left:122px;top:230px;font-size:10.8px;line-height:16px;color:#858585;transform:translate(0.60px,0.20px) rotate(0.03deg) scaleX(0.8763);-webkit-text-stroke:0.22px #858585;">Find Next</span>
<span class="t" style="left:122px;top:248px;font-size:10.8px;line-height:16px;color:#1b1b1b;transform:translate(0.60px,0.10px) rotate(0.03deg) scaleX(0.8665);-webkit-text-stroke:0.22px #1b1b1b;">Spelling</span>
<svg style="left:361.9px;top:254.05px" width="5" height="6" viewBox="0 0 5 6"><path d="M0.6 0.4 L3.4 2.9 L0.6 5.4" stroke="#353535" stroke-width="1.12" fill="none"/></svg>
<span class="t" style="left:122px;top:266px;font-size:10.8px;line-height:16px;color:#1b1b1b;transform:translate(0.60px,0.10px) rotate(0.03deg) scaleX(0.8938);-webkit-text-stroke:0.22px #1b1b1b;">Edit Custom Dictionary...</span>
<span class="t" style="left:122px;top:289px;font-size:10.8px;line-height:16px;color:#1b1b1b;transform:translate(0.60px,0.60px) rotate(0.03deg) scaleX(0.8614);-webkit-text-stroke:0.22px #1b1b1b;">Edit Colors</span>
<svg style="left:361.9px;top:295.55px" width="5" height="6" viewBox="0 0 5 6"><path d="M0.6 0.4 L3.4 2.9 L0.6 5.4" stroke="#353535" stroke-width="1.12" fill="none"/></svg>
<span class="t" style="left:122px;top:313px;font-size:10.8px;line-height:16px;color:#858585;transform:translate(0.60px,0.10px) rotate(0.03deg) scaleX(0.8839);-webkit-text-stroke:0.22px #858585;">Edit Original</span>
<span class="t" style="left:122px;top:336px;font-size:10.8px;line-height:16px;color:#1b1b1b;transform:translate(0.60px,0.60px) rotate(0.03deg) scaleX(0.8444);-webkit-text-stroke:0.22px #1b1b1b;">Transparency Flattener Presets...</span>
<span class="t" style="left:122px;top:354px;font-size:10.8px;line-height:16px;color:#1b1b1b;transform:translate(0.60px,0.60px) rotate(0.03deg) scaleX(0.8373);-webkit-text-stroke:0.22px #1b1b1b;">Print Presets...</span>
<span class="t" style="left:122px;top:372px;font-size:10.8px;line-height:16px;color:#1b1b1b;transform:translate(0.60px,0.60px) rotate(0.03deg) scaleX(0.8310);-webkit-text-stroke:0.22px #1b1b1b;">Adobe PDF Presets...</span>
<span class="t" style="left:122px;top:390px;font-size:10.8px;line-height:16px;color:#1b1b1b;transform:translate(0.60px,0.50px) rotate(0.03deg) scaleX(0.7919);-webkit-text-stroke:0.22px #1b1b1b;">SWF Presets...</span>
<span class="t" style="left:122px;top:408px;font-size:10.8px;line-height:16px;color:#1b1b1b;transform:translate(0.60px,0.50px) rotate(0.03deg) scaleX(0.8408);-webkit-text-stroke:0.22px #1b1b1b;">Perspective Grid Presets...</span>
<span class="t" style="left:122px;top:432px;font-size:10.8px;line-height:16px;color:#1b1b1b;transform:translate(0.60px,0.00px) rotate(0.03deg) scaleX(0.8694);-webkit-text-stroke:0.22px #1b1b1b;">Color Settings...</span>
<span class="t" style="left:304px;top:432px;font-size:10.8px;line-height:16px;color:#1b1b1b;transform:translate(0.80px,0.00px) rotate(0.03deg) scaleX(0.9188);-webkit-text-stroke:0.22px #1b1b1b;">Shift+Ctrl+K</span>
<span class="t" style="left:122px;top:449px;font-size:10.8px;line-height:16px;color:#1b1b1b;transform:translate(0.60px,0.90px) rotate(0.03deg) scaleX(0.8730);-webkit-text-stroke:0.22px #1b1b1b;">Assign Profile...</span>
<span class="t" style="left:122px;top:473px;font-size:10.8px;line-height:16px;color:#1b1b1b;transform:translate(0.60px,0.50px) rotate(0.03deg) scaleX(0.8714);-webkit-text-stroke:0.22px #1b1b1b;">Keyboard Shortcuts...</span>
<span class="t" style="left:286px;top:473px;font-size:10.8px;line-height:16px;color:#1b1b1b;transform:translate(0.00px,0.50px) rotate(0.03deg) scaleX(0.9373);-webkit-text-stroke:0.22px #1b1b1b;">Alt+Shift+Ctrl+K</span>
<span class="t" style="left:122px;top:497px;font-size:10.8px;line-height:16px;color:#1b1b1b;transform:translate(0.60px,0.00px) rotate(0.03deg) scaleX(0.8773);-webkit-text-stroke:0.22px #1b1b1b;">My Settings</span>
<svg style="left:361.9px;top:502.95px" width="5" height="6" viewBox="0 0 5 6"><path d="M0.6 0.4 L3.4 2.9 L0.6 5.4" stroke="#353535" stroke-width="1.12" fill="none"/></svg>
<span class="t" style="left:122px;top:520px;font-size:10.8px;line-height:16px;color:#1b1b1b;transform:translate(0.60px,0.50px) rotate(0.03deg) scaleX(0.8380);-webkit-text-stroke:0.22px #1b1b1b;">Preferences</span>
<svg style="left:361.9px;top:526.45px" width="5" height="6" viewBox="0 0 5 6"><path d="M0.6 0.4 L3.4 2.9 L0.6 5.4" stroke="#353535" stroke-width="1.12" fill="none"/></svg>
<div class="a" style="left:119px;top:58.80px;width:254px;height:1.2px;background:#dcdcdc;"></div>
<div class="a" style="left:119px;top:208.30px;width:254px;height:1.2px;background:#dcdcdc;"></div>
<div class="a" style="left:119px;top:285.80px;width:254px;height:1.2px;background:#dcdcdc;"></div>
<div class="a" style="left:119px;top:309.50px;width:254px;height:1.2px;background:#dcdcdc;"></div>
<div class="a" style="left:119px;top:332.80px;width:254px;height:1.2px;background:#dcdcdc;"></div>
<div class="a" style="left:119px;top:428.80px;width:254px;height:1.2px;background:#dcdcdc;"></div>
<div class="a" style="left:119px;top:470.00px;width:254px;height:1.2px;background:#dcdcdc;"></div>
<div class="a" style="left:119px;top:493.90px;width:254px;height:1.2px;background:#dcdcdc;"></div>
<div class="a" style="left:119px;top:516.90px;width:254px;height:1.2px;background:#dcdcdc;"></div>
</body></html>
